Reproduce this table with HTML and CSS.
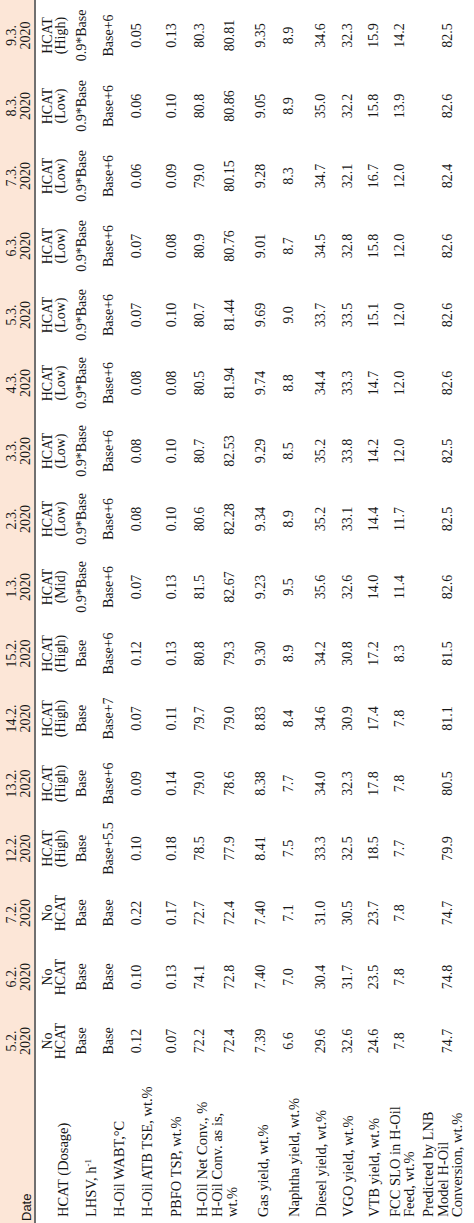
FILE: index.html
```html
<!DOCTYPE html>
<html>
<head>
<meta charset="utf-8">
<link rel="stylesheet" href="styles.css">
</head>
<body>
<div class="page">
<div class="rot">
<table class="data">
<colgroup>
<col class="c-lab">
<col class="c-a"><col class="c-a"><col class="c-a">
<col class="c-b"><col class="c-b"><col class="c-b"><col class="c-b">
<col class="c-c"><col class="c-c"><col class="c-c"><col class="c-c"><col class="c-c">
<col class="c-d"><col class="c-d"><col class="c-d"><col class="c-e">
</colgroup>
<thead>
<tr>
<th class="date">Date</th>
<th>5.2.<br>2020</th><th>6.2.<br>2020</th><th>7.2.<br>2020</th><th>12.2.<br>2020</th><th>13.2.<br>2020</th><th>14.2.<br>2020</th><th>15.2.<br>2020</th><th>1.3.<br>2020</th><th>2.3.<br>2020</th><th>3.3.<br>2020</th><th>4.3.<br>2020</th><th>5.3.<br>2020</th><th>6.3.<br>2020</th><th>7.3.<br>2020</th><th>8.3.<br>2020</th><th>9.3.<br>2020</th>
</tr>
</thead>
<tbody>
<tr class="r-hcat">
<th class="lab">HCAT (Dosage)</th>
<td>No<br>HCAT</td><td>No<br>HCAT</td><td>No<br>HCAT</td><td>HCAT<br>(High)</td><td>HCAT<br>(High)</td><td>HCAT<br>(High)</td><td>HCAT<br>(High)</td><td>HCAT<br>(Mid)</td><td>HCAT<br>(Low)</td><td>HCAT<br>(Low)</td><td>HCAT<br>(Low)</td><td>HCAT<br>(Low)</td><td>HCAT<br>(Low)</td><td>HCAT<br>(Low)</td><td>HCAT<br>(Low)</td><td>HCAT<br>(High)</td>
</tr>
<tr class="r-lhsv">
<th class="lab">LHSV, h<sup>-1</sup></th>
<td>Base</td><td>Base</td><td>Base</td><td>Base</td><td>Base</td><td>Base</td><td>Base</td><td>0.9*Base</td><td>0.9*Base</td><td>0.9*Base</td><td>0.9*Base</td><td>0.9*Base</td><td>0.9*Base</td><td>0.9*Base</td><td>0.9*Base</td><td>0.9*Base</td>
</tr>
<tr class="r-wabt">
<th class="lab">H-Oil WABT,°C</th>
<td>Base</td><td>Base</td><td>Base</td><td>Base+5.5</td><td>Base+6</td><td>Base+7</td><td>Base+6</td><td>Base+6</td><td>Base+6</td><td>Base+6</td><td>Base+6</td><td>Base+6</td><td>Base+6</td><td>Base+6</td><td>Base+6</td><td>Base+6</td>
</tr>
<tr class="r-atb">
<th class="lab">H-Oil ATB TSE, wt.%</th>
<td>0.12</td><td>0.10</td><td>0.22</td><td>0.10</td><td>0.09</td><td>0.07</td><td>0.12</td><td>0.07</td><td>0.08</td><td>0.08</td><td>0.08</td><td>0.07</td><td>0.07</td><td>0.06</td><td>0.06</td><td>0.05</td>
</tr>
<tr class="r-pbfo">
<th class="lab">PBFO TSP, wt.%</th>
<td>0.07</td><td>0.13</td><td>0.17</td><td>0.18</td><td>0.14</td><td>0.11</td><td>0.13</td><td>0.13</td><td>0.10</td><td>0.10</td><td>0.08</td><td>0.10</td><td>0.08</td><td>0.09</td><td>0.10</td><td>0.13</td>
</tr>
<tr class="r-net">
<th class="lab">H-Oil Net Conv., %</th>
<td>72.2</td><td>74.1</td><td>72.7</td><td>78.5</td><td>79.0</td><td>79.7</td><td>80.8</td><td>81.5</td><td>80.6</td><td>80.7</td><td>80.5</td><td>80.7</td><td>80.9</td><td>79.0</td><td>80.8</td><td>80.3</td>
</tr>
<tr class="r-conv">
<th class="lab">H-Oil Conv. as is,<br>wt.%</th>
<td>72.4</td><td>72.8</td><td>72.4</td><td>77.9</td><td>78.6</td><td>79.0</td><td>79.3</td><td>82.67</td><td>82.28</td><td>82.53</td><td>81.94</td><td>81.44</td><td>80.76</td><td>80.15</td><td>80.86</td><td>80.81</td>
</tr>
<tr class="r-gas">
<th class="lab">Gas yield, wt.%</th>
<td>7.39</td><td>7.40</td><td>7.40</td><td>8.41</td><td>8.38</td><td>8.83</td><td>9.30</td><td>9.23</td><td>9.34</td><td>9.29</td><td>9.74</td><td>9.69</td><td>9.01</td><td>9.28</td><td>9.05</td><td>9.35</td>
</tr>
<tr class="r-naph">
<th class="lab">Naphtha yield, wt.%</th>
<td>6.6</td><td>7.0</td><td>7.1</td><td>7.5</td><td>7.7</td><td>8.4</td><td>8.9</td><td>9.5</td><td>8.9</td><td>8.5</td><td>8.8</td><td>9.0</td><td>8.7</td><td>8.3</td><td>8.9</td><td>8.9</td>
</tr>
<tr class="r-dies">
<th class="lab">Diesel yield, wt.%</th>
<td>29.6</td><td>30.4</td><td>31.0</td><td>33.3</td><td>34.0</td><td>34.6</td><td>34.2</td><td>35.6</td><td>35.2</td><td>35.2</td><td>34.4</td><td>33.7</td><td>34.5</td><td>34.7</td><td>35.0</td><td>34.6</td>
</tr>
<tr class="r-vgo">
<th class="lab">VGO yield, wt.%</th>
<td>32.6</td><td>31.7</td><td>30.5</td><td>32.5</td><td>32.3</td><td>30.9</td><td>30.8</td><td>32.6</td><td>33.1</td><td>33.8</td><td>33.3</td><td>33.5</td><td>32.8</td><td>32.1</td><td>32.2</td><td>32.3</td>
</tr>
<tr class="r-vtb">
<th class="lab">VTB yield, wt.%</th>
<td>24.6</td><td>23.5</td><td>23.7</td><td>18.5</td><td>17.8</td><td>17.4</td><td>17.2</td><td>14.0</td><td>14.4</td><td>14.2</td><td>14.7</td><td>15.1</td><td>15.8</td><td>16.7</td><td>15.8</td><td>15.9</td>
</tr>
<tr class="r-fcc">
<th class="lab">FCC SLO in H-Oil<br>Feed, wt.%</th>
<td>7.8</td><td>7.8</td><td>7.8</td><td>7.7</td><td>7.8</td><td>7.8</td><td>8.3</td><td>11.4</td><td>11.7</td><td>12.0</td><td>12.0</td><td>12.0</td><td>12.0</td><td>12.0</td><td>13.9</td><td>14.2</td>
</tr>
<tr class="r-pred">
<th class="lab">Predicted by LNB<br>Model H-Oil<br>Conversion, wt.%</th>
<td>74.7</td><td>74.8</td><td>74.7</td><td>79.9</td><td>80.5</td><td>81.1</td><td>81.5</td><td>82.6</td><td>82.5</td><td>82.5</td><td>82.6</td><td>82.6</td><td>82.6</td><td>82.4</td><td>82.6</td><td>82.5</td>
</tr>
</tbody>
</table>
</div>
</div>
</body>
</html>
```

FILE: styles.css
```css
html, body {
  margin: 0;
  padding: 0;
  background: #ffffff;
}

.page {
  width: 474px;
  height: 1223px;
  overflow: hidden;
}

.rot {
  width: 1223px;
  height: 474px;
  transform-origin: 0 0;
  transform: translateY(1223px) rotate(-90deg);
}

.data {
  border-collapse: collapse;
  table-layout: fixed;
  width: 1223px;
  font-family: "Liberation Serif", "Times New Roman", serif;
  color: #161616;
}

.c-lab { width: 150px; }
.c-a { width: 64px; }
.c-b { width: 65px; }
.c-c { width: 68px; }
.c-d { width: 70px; }
.c-e { width: 71px; }

.data th,
.data td {
  padding: 0;
  font-weight: normal;
  vertical-align: top;
  text-align: center;
  font-size: 14px;
  line-height: 13px;
  white-space: nowrap;
}

.data thead tr {
  height: 35px;
  background: #fce6d7;
}

.data thead th {
  border-bottom: 2px solid #707070;
  padding-top: 5px;
  line-height: 14px;
}

.data thead th.date {
  font-family: "Liberation Sans", Arial, sans-serif;
  font-size: 13px;
  text-align: left;
  padding-left: 2px;
  padding-top: 20px;
}

.data th.lab {
  text-align: left;
  padding-left: 6px;
  font-size: 14.5px;
  line-height: 14.5px;
}

.data sup {
  font-size: 9px;
  line-height: 0;
  vertical-align: 5px;
}

.r-hcat { height: 38px; }
.r-hcat td { padding-top: 5px; }
.r-hcat th.lab { padding-top: 20px; }

.r-lhsv { height: 27px; }
.r-lhsv td { padding-top: 1.5px; }
.r-lhsv th.lab { padding-top: 10.5px; }

.r-wabt { height: 28px; }
.r-wabt td { padding-top: 1.5px; }
.r-wabt th.lab { padding-top: 11.5px; }

.r-atb { height: 35px; }
.r-atb td { padding-top: 1.5px; }
.r-atb th.lab { padding-top: 11.5px; }

.r-pbfo { height: 28px; }
.r-pbfo td { padding-top: 1.5px; }
.r-pbfo th.lab { padding-top: 5.5px; }

.r-net { height: 19px; }
.r-net td { padding-top: 1.5px; }
.r-net th.lab { padding-top: 4px; }

.r-conv { height: 42px; }
.r-conv td { padding-top: 12.5px; }
.r-conv th.lab { padding-top: 0; }

.r-gas { height: 28px; }
.r-gas td { padding-top: 1.5px; }
.r-gas th.lab { padding-top: 3.5px; }

.r-naph { height: 32px; }
.r-naph td { padding-top: 1.5px; }
.r-naph th.lab { padding-top: 6.5px; }

.r-dies { height: 27px; }
.r-dies td { padding-top: 1.5px; }
.r-dies th.lab { padding-top: 1.5px; }

.r-vgo { height: 26px; }
.r-vgo td { padding-top: 1.5px; }
.r-vgo th.lab { padding-top: 1.5px; }

.r-vtb { height: 21px; }
.r-vtb td { padding-top: 1.5px; }
.r-vtb th.lab { padding-top: 1.5px; }

.r-fcc { height: 33px; }
.r-fcc td { padding-top: 6.5px; }
.r-fcc th.lab { padding-top: 1.5px; }

.r-pred { height: 54px; }
.r-pred td { padding-top: 21.5px; }
.r-pred th.lab { padding-top: 2px; }
```
